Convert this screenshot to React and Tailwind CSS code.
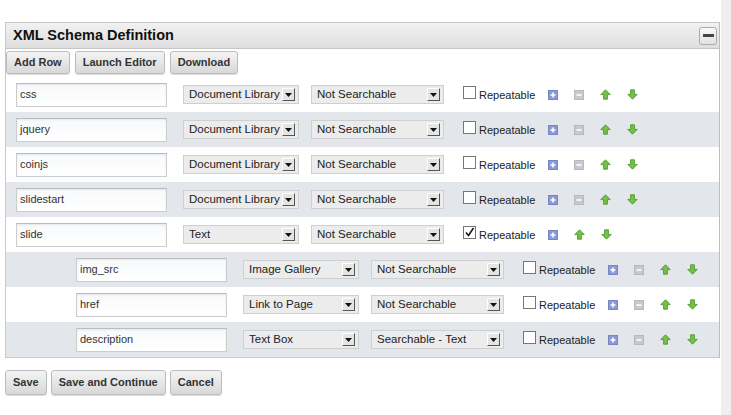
import React from "react";

const rows = [
  { name: "css", type: "Document Library", search: "Not Searchable" },
  { name: "jquery", type: "Document Library", search: "Not Searchable" },
  { name: "coinjs", type: "Document Library", search: "Not Searchable" },
  { name: "slidestart", type: "Document Library", search: "Not Searchable" },
  { name: "slide", type: "Text", search: "Not Searchable", checked: true, parent: true },
  { name: "img_src", type: "Image Gallery", search: "Not Searchable", child: true },
  { name: "href", type: "Link to Page", search: "Not Searchable", child: true },
  { name: "description", type: "Text Box", search: "Searchable - Text", child: true },
];

function PlusIcon() {
  return (
    <svg width="10" height="10" viewBox="0 0 10 10">
      <rect x="0.5" y="0.5" width="9" height="9" fill="#8b9ad6" stroke="#7585c8" />
      <path d="M5 2.5v5M2.5 5h5" stroke="#fff" strokeWidth="1.6" />
    </svg>
  );
}

function MinusIcon() {
  return (
    <svg width="10" height="10" viewBox="0 0 10 10">
      <rect x="0.5" y="0.5" width="9" height="9" fill="#c6c9cf" stroke="#b5b9c0" />
      <path d="M2.5 5h5" stroke="#fff" strokeWidth="1.6" />
    </svg>
  );
}

function UpIcon() {
  return (
    <svg width="11" height="11" viewBox="0 0 11 11">
      <path d="M5.5 0.8L10.2 5.6H7.4V10.2H3.6V5.6H0.8Z" fill="#74c04a" stroke="#4e9a2c" strokeWidth="0.9" strokeLinejoin="round" />
    </svg>
  );
}

function DownIcon() {
  return (
    <svg width="11" height="11" viewBox="0 0 11 11">
      <path d="M5.5 10.2L10.2 5.4H7.4V0.8H3.6V5.4H0.8Z" fill="#74c04a" stroke="#4e9a2c" strokeWidth="0.9" strokeLinejoin="round" />
    </svg>
  );
}

function Select({ value, width }) {
  return (
    <div
      className={`flex items-center justify-between h-[19px] ${width} border border-[#cfcfcf] bg-[#ececec] pl-[5px] pr-[3px] text-[11.5px] text-[#222]`}
    >
      <span>{value}</span>
      <span className="flex items-center justify-center w-[13px] h-[13px] bg-[#e4e4e4] border-t border-l border-t-white border-l-white border-b border-r border-b-[#555] border-r-[#555]">
        <svg width="7" height="4" viewBox="0 0 7 4">
          <path d="M0 0h7L3.5 4z" fill="#111" />
        </svg>
      </span>
    </div>
  );
}

function Btn({ children, h = "h-[23px]" }) {
  return (
    <button className={`${h} px-[7px] rounded-[3px] border border-[#bdbdbd] bg-gradient-to-b from-[#f4f4f4] to-[#d8d8d8] text-[11px] font-bold text-[#333] shadow-[0_1px_1px_rgba(0,0,0,0.15)]`}>
      {children}
    </button>
  );
}

function Row({ row, index }) {
  const shade = index % 2 === 1 ? "bg-[#e3e6ea]" : "bg-white";
  return (
    <div className={`flex items-center h-[35px] ${shade} ${row.child ? "pl-[70px]" : "pl-[10px]"}`}>
      <div className="w-[151px] h-[24px] border border-[#cdcdcd] border-t-[#bbb] bg-gradient-to-b from-[#f7f9fb] to-white shadow-[inset_0_1px_2px_rgba(0,0,0,0.08)] flex items-center px-[3px] text-[11px] text-[#333]">
        {row.name}
      </div>
      <div className="ml-[16px]">
        <Select value={row.type} width="w-[116px]" />
      </div>
      <div className="ml-[12px]">
        <Select value={row.search} width="w-[133px]" />
      </div>
      <label className="ml-[19px] flex items-center text-[11px] text-[#222]">
        <span className="w-[13px] h-[13px] border border-[#777] bg-white flex items-center justify-center mb-[4px]">
          {row.checked && (
            <svg width="11" height="11" viewBox="0 0 11 11">
              <path d="M2 5.5L4.5 8.5L9.5 1" stroke="#111" strokeWidth="1.5" fill="none" />
            </svg>
          )}
        </span>
        <span className="ml-[3px] mt-[2px]">Repeatable</span>
      </label>
      <div className="ml-[13px] flex items-center gap-[16px]">
        <PlusIcon />
        {!row.parent && <MinusIcon />}
        <UpIcon />
        <DownIcon />
      </div>
    </div>
  );
}

export default function App() {
  return (
    <div className="w-[731px] h-[415px] flex bg-white font-['Liberation_Sans',Arial,sans-serif] overflow-hidden">
      <div className="w-[721px] pt-[22px] pl-[5px] flex flex-col">
        <div className="border border-[#c8c8c8] border-r-[#bdbdbd]">
          <div className="h-[26px] flex items-center justify-between pl-[7px] pr-[2px] bg-gradient-to-b from-[#f1f1f1] to-[#dedede] border-b border-[#c6c6c6]">
            <h1 className="text-[14.5px] font-bold text-[#111]">XML Schema Definition</h1>
            <button className="w-[18px] h-[18px] rounded-[3px] border border-[#aaa] bg-gradient-to-b from-[#fafafa] to-[#e2e2e2] flex items-center justify-center">
              <span className="w-[11px] h-[3px] bg-[#444]" />
            </button>
          </div>
          <div className="flex gap-[5px] pt-[2px] pb-[3px]">
            <Btn>Add Row</Btn>
            <Btn>Launch Editor</Btn>
            <Btn>Download</Btn>
          </div>
          {rows.map((r, i) => (
            <Row key={r.name} row={r} index={i} />
          ))}
        </div>
        <div className="flex gap-[4px] mt-[12px]">
          <Btn h="h-[25px]">Save</Btn>
          <Btn h="h-[25px]">Save and Continue</Btn>
          <Btn h="h-[25px]">Cancel</Btn>
        </div>
      </div>
      <div className="w-[10px] ml-[1px] bg-[#efefef]" />
    </div>
  );
}
